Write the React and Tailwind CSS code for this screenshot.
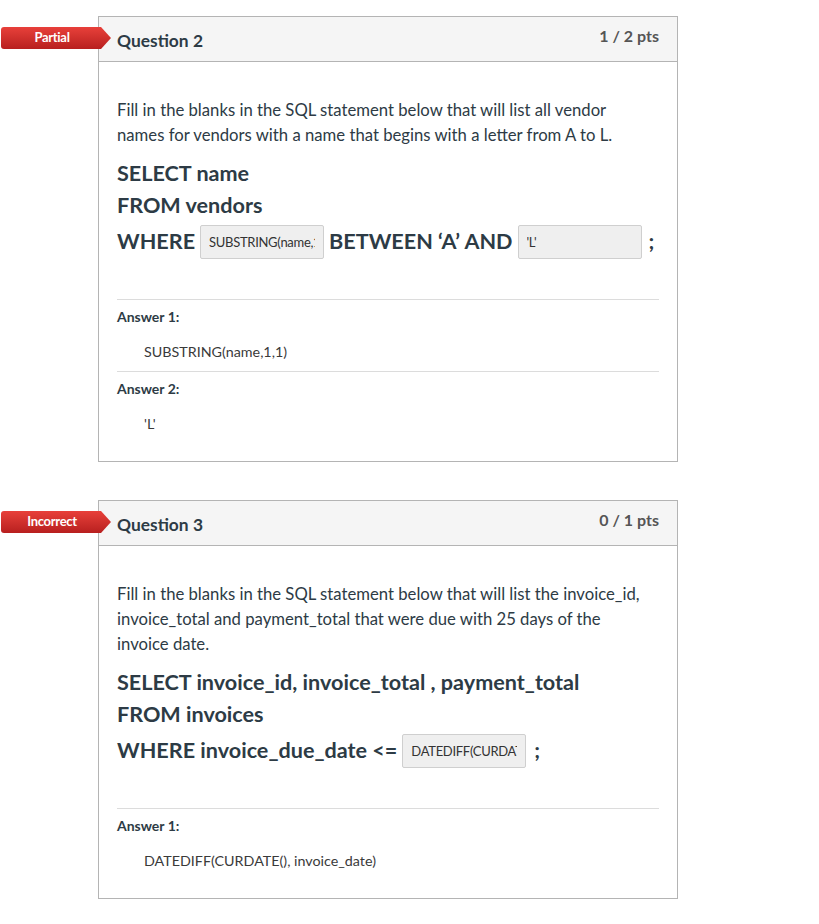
import React from 'react';

const font = { fontFamily: 'Lato, "Open Sans", sans-serif' };

const Badge = ({ label }) => (
  <div className="absolute left-[-98px] top-[10px] w-[110px] h-[22px] rounded-l-[3px] bg-gradient-to-b from-[#e8403a] to-[#b81f1f] text-white text-[13px] font-bold flex items-center [clip-path:polygon(0_0,100px_0,110px_50%,100px_100%,0_100%)]">
    <span className="w-[102px] text-center tracking-[-0.3px]">{label}</span>
  </div>
);

const Blank = ({ value }) => (
  <input
    readOnly
    value={value}
    className="w-[124px] h-[34px] shrink-0 bg-[#efefef] border border-[#cfcfcf] rounded-[2px] px-[8px] text-[13px] font-normal text-[#333] tracking-[-0.3px] outline-none"
    style={font}
  />
);

const Answer = ({ label, value, last }) => (
  <div className={`pt-[7px] ${last ? 'pb-[27px]' : 'pb-[9px] border-b border-[#dcdcdc]'}`}>
    <div className="text-[14px] font-bold leading-[20px] text-[#2d3b45]">{label}</div>
    <div className="mt-[15px] pl-[27px] text-[14.3px] leading-[20px] text-[#3a3a3a]">{value}</div>
  </div>
);

const Card = ({ badge, title, pts, children, answers }) => (
  <div className="relative ml-[98px] w-[580px] border border-[#b4b4b4] bg-white">
    <Badge label={badge} />
    <div className="h-[45px] bg-[#f5f5f5] border-b border-[#b4b4b4] flex justify-between items-start px-[18px]">
      <div className="mt-[12px] text-[17.4px] font-bold leading-[24px] text-[#2d3b45]">{title}</div>
      <div className="mt-[7px] text-[16px] font-bold leading-[24px] text-[#555]">{pts}</div>
    </div>
    <div className="px-[18px] pt-[36px]">
      {children}
      <div className="mt-[37px] border-t border-[#dcdcdc]">
        {answers.map((a, i) => (
          <Answer key={i} label={a.label} value={a.value} last={i === answers.length - 1} />
        ))}
      </div>
    </div>
  </div>
);

export default function App() {
  return (
    <div className="min-h-screen bg-white pt-[16px] pb-[30px]" style={font}>
      <Card
        badge="Partial"
        title="Question 2"
        pts="1 / 2 pts"
        answers={[
          { label: 'Answer 1:', value: 'SUBSTRING(name,1,1)' },
          { label: 'Answer 2:', value: "'L'" },
        ]}
      >
        <p className="text-[16.7px] leading-[25px] text-[#2d3b45] pr-[12px]">
          Fill in the blanks in the SQL statement below that will list all vendor names for vendors with a name that begins with a letter from A to L.
        </p>
        <div className="mt-[9px] text-[21.6px] font-bold text-[#2d3b45] whitespace-nowrap">
          <div className="leading-[32px]">SELECT name</div>
          <div className="leading-[32px]">FROM vendors</div>
          <div className="h-[41px] flex items-center">
            <span className="shrink-0">WHERE</span>
            <span className="ml-[5px] flex shrink-0"><Blank value="SUBSTRING(name,1,1)" /></span>
            <span className="ml-[5px] shrink-0">BETWEEN ‘A’ AND</span>
            <span className="ml-[5px] flex shrink-0"><Blank value="'L'" /></span>
            <span className="ml-[7px] shrink-0">;</span>
          </div>
        </div>
      </Card>

      <div className="h-[38px]" />

      <Card
        badge="Incorrect"
        title="Question 3"
        pts="0 / 1 pts"
        answers={[{ label: 'Answer 1:', value: 'DATEDIFF(CURDATE(), invoice_date)' }]}
      >
        <p className="text-[16.7px] leading-[25px] text-[#2d3b45] pr-[12px]">
          Fill in the blanks in the SQL statement below that will list the invoice_id, invoice_total and payment_total that were due with 25 days of the invoice date.
        </p>
        <div className="mt-[9px] text-[21.6px] font-bold text-[#2d3b45] whitespace-nowrap">
          <div className="leading-[32px]">SELECT invoice_id, invoice_total , payment_total</div>
          <div className="leading-[32px]">FROM invoices</div>
          <div className="h-[41px] flex items-center">
            <span className="shrink-0">WHERE invoice_due_date &lt;=</span>
            <span className="ml-[5px] flex shrink-0"><Blank value="DATEDIFF(CURDATE(), invoice_date)" /></span>
            <span className="ml-[8px] shrink-0">;</span>
          </div>
        </div>
      </Card>
    </div>
  );
}
